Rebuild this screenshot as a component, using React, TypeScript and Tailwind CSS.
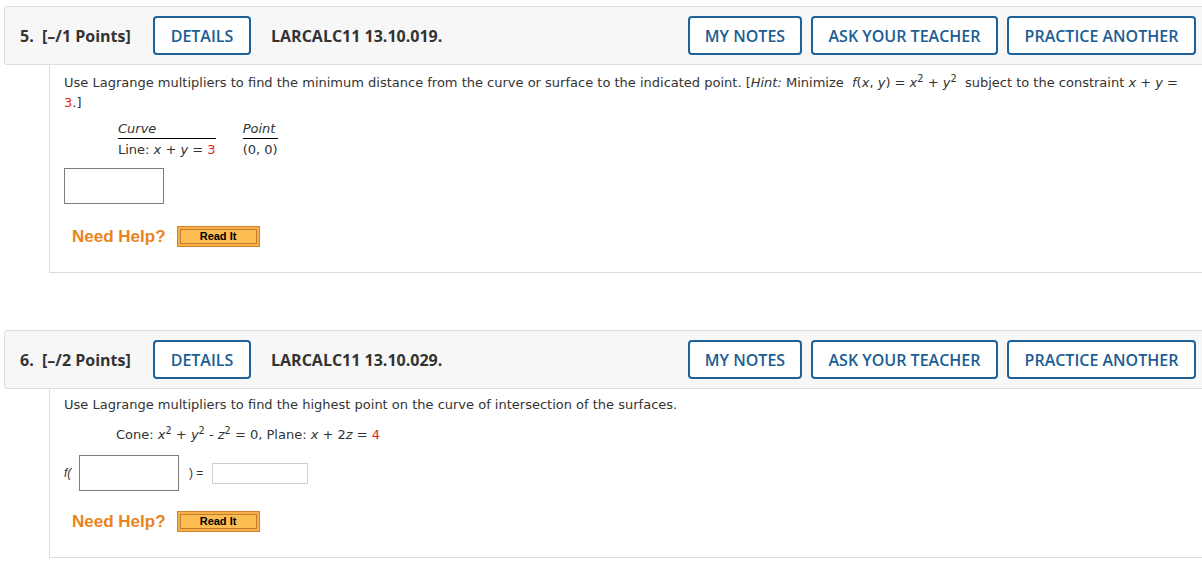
import React from "react";

type HeaderProps = {
  num: number;
  points: number;
  code: string;
};

const blueBtn =
  "h-[39px] rounded-[4px] border-2 border-[#1c6199] bg-white text-[16px] font-semibold text-[#1c5d94] flex items-center justify-center shrink-0";

const QuestionHeader: React.FC<HeaderProps> = ({ num, points, code }) => (
  <div className="h-[59px] rounded-[3px] border border-[#dedede] bg-[#f7f7f7] flex items-center pl-[15px] pr-[17px] font-['Open_Sans',sans-serif] text-[#333]">
    <span className="text-[16px] font-bold w-[117px] shrink-0">
      {num}.&nbsp; [–/{points} Points]
    </span>
    <button className={`${blueBtn} w-[98px] ml-[16px]`}>DETAILS</button>
    <span className="ml-[20px] text-[16px] font-bold">{code}</span>
    <div className="ml-auto flex gap-[9px]">
      <button className={`${blueBtn} w-[114px]`}>MY NOTES</button>
      <button className={`${blueBtn} w-[187px]`}>ASK YOUR TEACHER</button>
      <button className={`${blueBtn} w-[189px]`}>PRACTICE ANOTHER</button>
    </div>
  </div>
);

const NeedHelp: React.FC = () => (
  <div className="flex items-center ml-[8px]">
    <span className="font-['Liberation_Sans',Arial,sans-serif] text-[17px] font-bold text-[#e8841c]">
      Need Help?
    </span>
    <div className="ml-[11px] w-[83px] h-[21px] border border-[#d4822c] bg-[#f9ae48] p-[2px]">
      <div className="h-full border border-[#c07d32] bg-[#fcbd52] flex items-center justify-center font-['Liberation_Sans',Arial,sans-serif] text-[11px] font-bold text-black leading-none">
        Read It
      </div>
    </div>
  </div>
);

const Red: React.FC<{ children: React.ReactNode }> = ({ children }) => (
  <span className="text-[#e0231d]">{children}</span>
);

const App: React.FC = () => {
  return (
    <div className="w-[1202px] h-[579px] overflow-hidden bg-white pl-[4px] pt-[6px]">
      <div className="w-[1210px]">
        {/* Question 5 */}
        <QuestionHeader num={5} points={1} code="LARCALC11 13.10.019." />
        <div className="ml-[45px] border-l border-b border-[#dcdcdc] pl-[14px] pt-[8px] pb-[25px] font-['DejaVu_Sans',Verdana,sans-serif] text-[13px] leading-[20px] text-[#333]">
          <p className="w-[1135px]">
            Use Lagrange multipliers to find the minimum distance from the curve or
            surface to the indicated point. [<i>Hint:</i> Minimize&nbsp; <i>f</i>(<i>x</i>,{" "}
            <i>y</i>) = <i>x</i>
            <sup>2</sup> + <i>y</i>
            <sup>2</sup>&nbsp; subject to the constraint <i>x</i> + <i>y</i> ={" "}
            <Red>3</Red>.]
          </p>
          <table className="ml-[54px] mt-[6px] border-separate border-spacing-0 leading-[19px]">
            <tbody>
              <tr>
                <td className="italic border-b border-black pr-[2px]">Curve</td>
                <td className="w-[27px]"></td>
                <td className="italic border-b border-black">Point</td>
              </tr>
              <tr>
                <td className="pt-[1px]">
                  Line: <i>x</i> + <i>y</i> = <Red>3</Red>
                </td>
                <td></td>
                <td className="pt-[1px]">(0, 0)</td>
              </tr>
            </tbody>
          </table>
          <div className="mt-[9px] w-[100px] h-[36px] border-[1.5px] border-[#7d7d7d] bg-white"></div>
          <div className="mt-[22px]">
            <NeedHelp />
          </div>
        </div>

        <div className="h-[57px]"></div>

        {/* Question 6 */}
        <QuestionHeader num={6} points={2} code="LARCALC11 13.10.029." />
        <div className="ml-[45px] border-l border-b border-[#dcdcdc] pl-[14px] pt-[6px] pb-[25px] font-['DejaVu_Sans',Verdana,sans-serif] text-[13px] leading-[20px] text-[#333]">
          <p>
            Use Lagrange multipliers to find the highest point on the curve of
            intersection of the surfaces.
          </p>
          <p className="mt-[10px] ml-[52px]">
            Cone: <i>x</i>
            <sup>2</sup> + <i>y</i>
            <sup>2</sup> - <i>z</i>
            <sup>2</sup> = 0, Plane: <i>x</i> + 2<i>z</i> = <Red>4</Red>
          </p>
          <div className="mt-[10px] flex items-center">
            <span className="italic text-[12px] w-[15px] font-['Liberation_Sans',Arial,sans-serif]">f(</span>
            <div className="w-[100px] h-[36px] border-[1.5px] border-[#7d7d7d] bg-white"></div>
            <span className="ml-[10px] text-[12px] font-['Liberation_Sans',Arial,sans-serif]">) =</span>
            <div className="ml-[9px] w-[96px] h-[21px] border border-[#cfcfcf] bg-white"></div>
          </div>
          <div className="mt-[20px]">
            <NeedHelp />
          </div>
        </div>
      </div>
    </div>
  );
};

export default App;
